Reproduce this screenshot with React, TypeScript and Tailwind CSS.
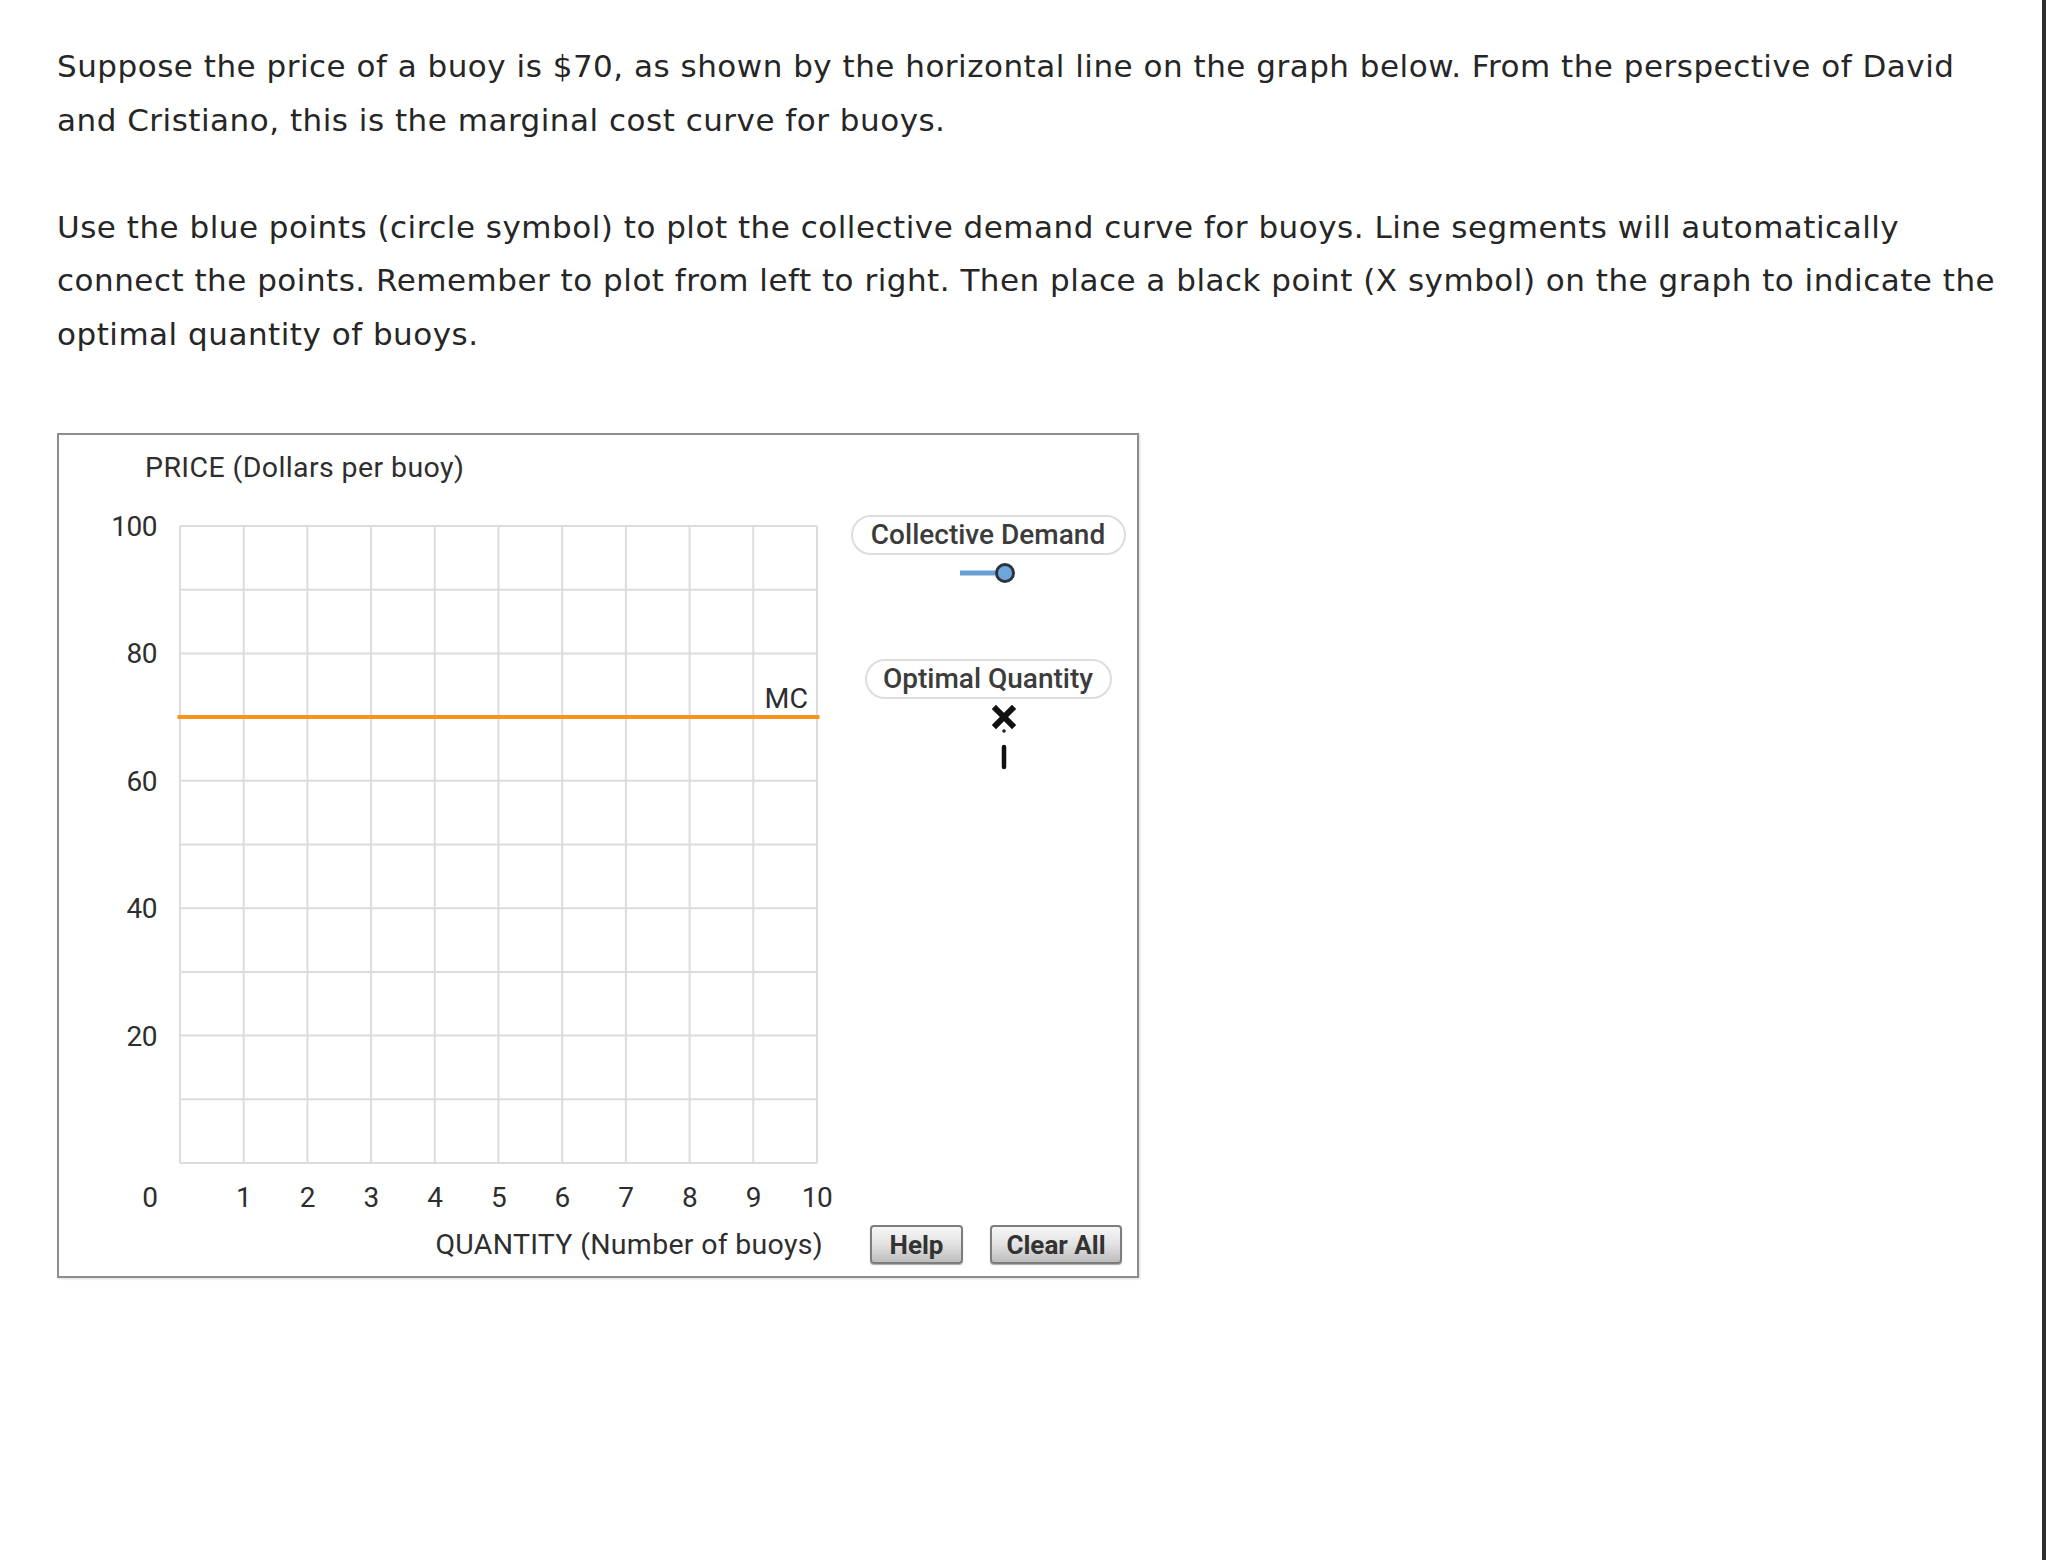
import React from "react";

const GRID_LEFT = 121;
const GRID_TOP = 91;
const CELL = 63.7;

function Chart() {
  const vlines = Array.from({ length: 11 }, (_, i) => GRID_LEFT + i * CELL);
  const hlines = Array.from({ length: 11 }, (_, i) => GRID_TOP + i * CELL);
  const yLabels = [100, 80, 60, 40, 20];
  const gridRight = GRID_LEFT + 10 * CELL;
  const gridBottom = GRID_TOP + 10 * CELL;
  const mcY = GRID_TOP + 3 * CELL;
  return (
    <svg width={780} height={841} className="shrink-0" style={{ fontFamily: "Roboto, 'Liberation Sans', sans-serif" }}>
      <text x={86} y={42} fontSize={28.5} fill="#2e2e2e" letterSpacing={0.4}>
        PRICE (Dollars per buoy)
      </text>
      {vlines.map((x, i) => (
        <line key={"v" + i} x1={x} y1={GRID_TOP} x2={x} y2={gridBottom} stroke="#dcdcdc" strokeWidth={2} />
      ))}
      {hlines.map((y, i) => (
        <line key={"h" + i} x1={GRID_LEFT} y1={y} x2={gridRight} y2={y} stroke="#dcdcdc" strokeWidth={2} />
      ))}
      {yLabels.map((v, i) => (
        <text key={v} x={98} y={GRID_TOP + i * 2 * CELL + 10} fontSize={28} fill="#2e2e2e" textAnchor="end" letterSpacing={-0.5}>
          {v}
        </text>
      ))}
      <text x={91} y={772} fontSize={28} fill="#2e2e2e" textAnchor="middle">
        0
      </text>
      {Array.from({ length: 10 }, (_, i) => (
        <text key={"x" + i} x={GRID_LEFT + (i + 1) * CELL} y={772} fontSize={28} fill="#2e2e2e" textAnchor="middle" letterSpacing={-0.5}>
          {i + 1}
        </text>
      ))}
      <line x1={118.5} y1={mcY} x2={760.5} y2={mcY} stroke="#f7941d" strokeWidth={4} />
      <text x={749} y={mcY - 9} fontSize={28.5} fill="#2e2e2e" textAnchor="end">
        MC
      </text>
      <text x={764} y={819} fontSize={28.5} fill="#2e2e2e" textAnchor="end" letterSpacing={0.3}>
        QUANTITY (Number of buoys)
      </text>
    </svg>
  );
}

function Pill({ label, width }: { label: string; width: string }) {
  return (
    <div
      className={`${width} h-[40px] rounded-full border-2 border-[#dddddd] flex items-center justify-center text-[28px] font-medium text-[#3c3c3c] leading-none`}
      style={{ fontFamily: "Roboto, 'Liberation Sans', sans-serif" }}
    >
      {label}
    </div>
  );
}

function Btn({ label, width }: { label: string; width: string }) {
  return (
    <button
      className={`${width} h-[39px] rounded-[4px] border-2 border-[#7d7d7d] bg-gradient-to-b from-[#f7f7f7] via-[#e2e2e2] to-[#bdbdbd] text-[26px] font-bold text-[#333333] leading-none flex items-center justify-center shadow-[0_1px_1px_rgba(0,0,0,0.35)]`}
      style={{ fontFamily: "Roboto, 'Liberation Sans', sans-serif" }}
    >
      {label}
    </button>
  );
}

export default function App() {
  return (
    <div className="w-[2046px] h-[1560px] bg-white border-r-[4px] border-[#2e2e2e] box-border">
      <div
        className="pl-[57px] pt-[40px] text-[31px] leading-[53.5px] text-[#262626] tracking-[0.5px]"
        style={{ fontFamily: "'DejaVu Sans', Verdana, sans-serif" }}
      >
        <p className="whitespace-nowrap">
          Suppose the price of a buoy is $70, as shown by the horizontal line on the graph below. From the perspective of David
          <br />
          and Cristiano, this is the marginal cost curve for buoys.
        </p>
        <p className="whitespace-nowrap mt-[53.5px]">
          Use the blue points (circle symbol) to plot the collective demand curve for buoys. Line segments will automatically
          <br />
          connect the points. Remember to plot from left to right. Then place a black point (X symbol) on the graph to indicate the
          <br />
          optimal quantity of buoys.
        </p>
      </div>

      <div className="ml-[57px] mt-[72px] w-[1082px] h-[845px] border-2 border-[#8e8e8e] flex shadow-[1px_1px_2px_rgba(0,0,0,0.15)]">
        <Chart />
        <div className="flex-1 flex flex-col items-center pt-[80px]">
          <Pill label="Collective Demand" width="w-[275px]" />
          <svg width={90} height={24} className="mt-[6px]">
            <line x1={17} y1={12} x2={56} y2={12} stroke="#6a9fd4" strokeWidth={5} />
            <circle cx={62} cy={12} r={8.5} fill="#6fa6dc" stroke="#2b3540" strokeWidth={3} />
          </svg>
          <div className="mt-[74px]">
            <Pill label="Optimal Quantity" width="w-[247px]" />
          </div>
          <svg width={90} height={72}>
            <path d="M 53 10 L 69 26 M 69 10 L 53 26" stroke="#111" strokeWidth={6} strokeLinecap="square" />
            <circle cx={61} cy={32} r={1.8} fill="#222" />
            <line x1={61} y1={48} x2={61} y2={68} stroke="#111" strokeWidth={4.5} strokeLinecap="round" />
          </svg>
          <div className="mt-auto pb-[12px] self-stretch flex justify-end gap-[27px] pr-[15px]">
            <Btn label="Help" width="w-[93px]" />
            <Btn label="Clear All" width="w-[132px]" />
          </div>
        </div>
      </div>
    </div>
  );
}
